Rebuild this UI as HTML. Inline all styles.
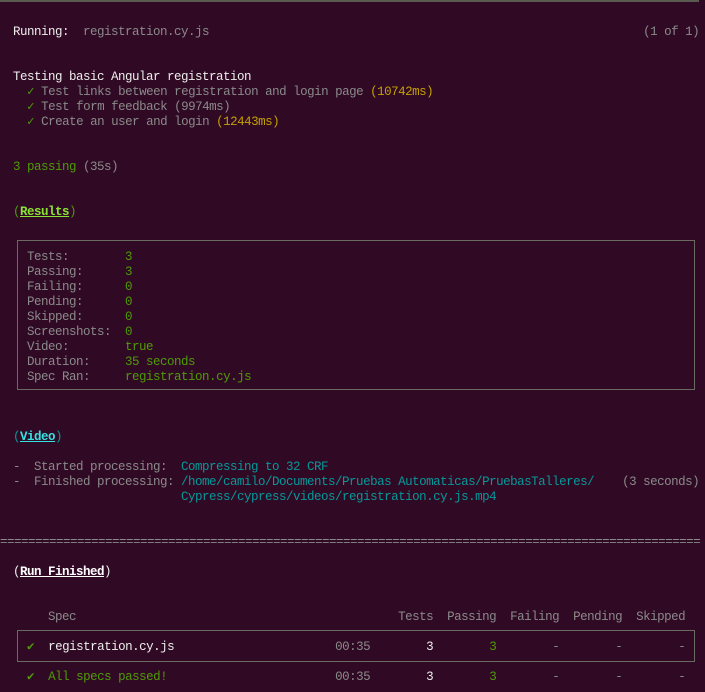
<!DOCTYPE html>
<html><head><meta charset="utf-8"><style>
html,body{margin:0;padding:0;background:#300a24;width:705px;height:692px;overflow:hidden;position:relative}
pre{margin:0;position:absolute;left:13px;top:25px;font-family:"Liberation Mono","DejaVu Sans Mono",monospace;font-size:12.5px;letter-spacing:-0.5px;line-height:15px;color:#e8e8e8;white-space:pre}
.g{color:#8a8a8a}.gr{color:#4e9a06}.y{color:#c4a000}.c{color:#06989a}.w{color:#eeeeec}
.bg{color:#8ae234;font-weight:bold;text-decoration:underline}
.bc{color:#34e2e2;font-weight:bold;text-decoration:underline}
.bw{color:#fff;font-weight:bold;text-decoration:underline}
.top{position:absolute;left:0;top:0;width:699px;height:2px;background:#5a5a50}
.box{position:absolute;border:1px solid #6a6a60}
.eq{position:absolute;left:0;top:535px;font-family:"Liberation Mono",monospace;font-size:12.5px;letter-spacing:-0.5px;line-height:15px;color:#8a8a8a;white-space:pre}
</style></head><body>
<div class="top"></div>
<div class="box" style="left:17px;top:240px;width:676px;height:148px"></div>
<div class="box" style="left:17px;top:630px;width:676px;height:30px"></div>
<div class="eq">====================================================================================================</div>
<pre><span class="w">Running:</span>  <span class="g">registration.cy.js</span>                                                              <span class="g">(1 of 1)</span>


<span class="w">Testing basic Angular registration</span>
  <span class="gr">✓</span> <span class="g">Test links between registration and login page </span><span class="y">(10742ms)</span>
  <span class="gr">✓</span> <span class="g">Test form feedback (9974ms)</span>
  <span class="gr">✓</span> <span class="g">Create an user and login </span><span class="y">(12443ms)</span>


<span class="gr">3 passing</span> <span class="g">(35s)</span>


<span class="gr">(</span><span class="bg">Results</span><span class="gr">)</span>


  <span class="g">Tests:</span>        <span class="gr">3</span>
  <span class="g">Passing:</span>      <span class="gr">3</span>
  <span class="g">Failing:</span>      <span class="gr">0</span>
  <span class="g">Pending:</span>      <span class="gr">0</span>
  <span class="g">Skipped:</span>      <span class="gr">0</span>
  <span class="g">Screenshots:</span>  <span class="gr">0</span>
  <span class="g">Video:</span>        <span class="gr">true</span>
  <span class="g">Duration:</span>     <span class="gr">35 seconds</span>
  <span class="g">Spec Ran:</span>     <span class="gr">registration.cy.js</span>



<span class="c">(</span><span class="bc">Video</span><span class="c">)</span>

<span class="g">-  Started processing:  </span><span class="c">Compressing to 32 CRF</span>
<span class="g">-  Finished processing: </span><span class="c">/home/camilo/Documents/Pruebas Automaticas/PruebasTalleres/</span>    <span class="g">(3 seconds)</span>
                        <span class="c">Cypress/cypress/videos/registration.cy.js.mp4</span>




<span class="w">(</span><span class="bw">Run Finished</span><span class="w">)</span>


     <span class="g">Spec                                              Tests  Passing  Failing  Pending  Skipped</span>

  <span class="gr">✔</span>  <span class="w">registration.cy.js</span>                       <span class="g">00:35</span>        <span class="w">3</span>        <span class="gr">3</span>        <span class="g">-</span>        <span class="g">-</span>        <span class="g">-</span>

  <span class="gr">✔</span>  <span class="gr">All specs passed!</span>                        <span class="g">00:35</span>        <span class="w">3</span>        <span class="gr">3</span>        <span class="g">-</span>        <span class="g">-</span>        <span class="g">-</span>
</pre>
</body></html>
